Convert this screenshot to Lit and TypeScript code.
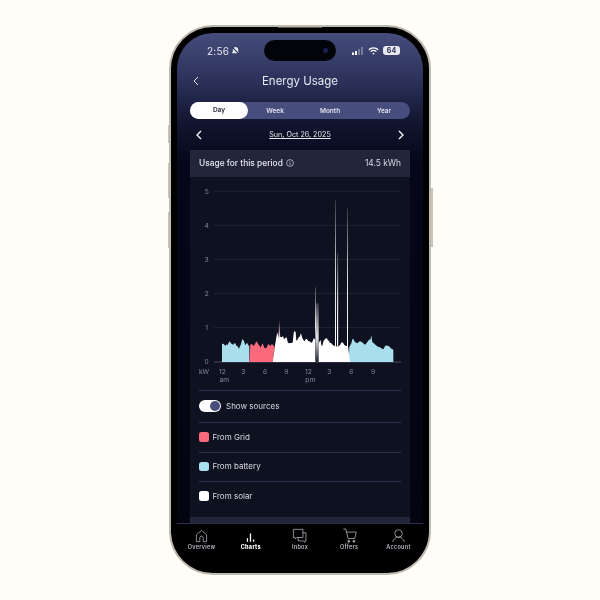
import { LitElement, html, css, svg } from "lit";
import { customElement } from "lit/decorators.js";

const blue1 = "96,546 96,492 100,491 103,494 107,497 110,493 113,495 118,484 122,488 125,492 130,494 133,490 136,490 139,497 142,498 147,506 150,498 152,495 155,484 157,477 160,480 163,486 165,493 167,495 170,489 172,490 175,496 178,498 178,546";
const red = "178,546 181,494 186,492 189,496 192,498 196,490 200,484 203,490 206,495 209,497 212,503 215,495 218,490 221,498 224,505 230,503 233,496 236,492 239,496 242,498 245,492 248,494 254,500 248,546";
const white = "248,546 256,490 259,472 262,457 265,470 268,476 271,470 276,472 279,468 282,478 286,474 290,472 293,486 296,490 302,489 308,488 311,460 313,453 317,456 319,482 322,480 326,472 329,470 333,460 336,472 340,480 344,484 347,478 350,476 354,482 358,484 362,487 366,488 370,478 372,474 376,480 376,546 386,546 386,490 390,482 392,480 394,496 397,497 400,484 403,480 406,476 409,474 412,478 416,482 420,488 424,490 428,494 431,497 435,498 444,500 447,497 450,496 453,490 456,486 460,490 463,495 468,498 474,498 480,546";
const blue2 = "476,546 478,500 481,496 484,490 487,478 490,476 493,484 496,486 499,489 502,490 506,486 510,484 514,485 518,488 522,492 526,494 529,490 532,486 535,482 538,478 541,480 544,466 546,480 548,488 552,490 556,494 560,497 564,500 568,501 572,503 576,506 580,508 584,500 588,496 592,497 596,498 600,502 604,506 607,507 610,510 610,546";

const tabs = [
  { label: "Overview", on: false, icon: svg`<path d="M3.500 10 11 3.500 18.500 10v10h-5v-5.500a2.500 2.500 0 0 0-5 0V20h-5z"/>` },
  { label: "Charts", on: true, icon: svg`<path d="M6.500 15v5M11 8v12M15.500 17v3" stroke-width="1.900"/>` },
  { label: "Inbox", on: false, icon: svg`<path d="M2 2h14v12H7l-2.500 2v-2H2z"/><path d="M16 7h4.500v12H19v2l-2.500-2H9v-5"/>` },
  { label: "Offers", on: false, icon: svg`<path d="M2 1.500h3.500l3.500 14h9.500L21 6H6.500"/><circle cx="10" cy="19.500" r="1.300" fill="currentColor"/><circle cx="17.500" cy="19.500" r="1.300" fill="currentColor"/>` },
  { label: "Account", on: false, icon: svg`<circle cx="11" cy="8" r="5.500"/><path d="M2.500 20.500c1-4.500 4.500-7 8.500-7s7.500 2.500 8.500 7"/>` },
];

@customElement("app-root")
export class AppRoot extends LitElement {
  static styles = css`
    :host {
      display: flex;
      align-items: center;
      justify-content: center;
      width: 600px;
      height: 600px;
      background: #fffdf6;
      font-family: "Inter", "Liberation Sans", sans-serif;
      color: #e6e8f0;
    }
    .phone {
      position: relative;
      width: 262px;
      height: 550px;
      box-sizing: border-box;
      padding: 6px;
      border-radius: 44px;
      background: #000;
      border: 2px solid #bdbaae;
      will-change: transform;
    }
    .btn { position: absolute; width: 1.500px; background: #c8c5b8; }
    .b1 { left: -3.500px; top: 98px; height: 18px; }
    .b2 { left: -3.500px; top: 136px; height: 35px; }
    .b3 { left: -3.500px; top: 185px; height: 36px; }
    .b4 { right: -3.500px; top: 161px; height: 59px; }
    .speaker { position: absolute; left: 107px; top: 0; width: 44px; height: 1px; background: #55544f; }
    .screen {
      height: 100%;
      border-radius: 36px;
      overflow: hidden;
      display: flex;
      flex-direction: column;
      background: linear-gradient(180deg, #474d7c 0, #2a3058 50px, #11152e 90px, #05071a 130px, #03040e 100%);
    }
    .status {
      height: 35px;
      flex: none;
      display: grid;
      grid-template-columns: 1fr 72px 1fr;
      align-items: center;
      font-size: 10px;
    }
    .time { display: flex; align-items: center; gap: 2px; padding-left: 30px; letter-spacing: 0.200px; }
    .island {
      height: 21px;
      border-radius: 11px;
      background: #03040a;
      display: flex;
      align-items: center;
      justify-content: flex-end;
      padding-right: 8px;
      box-sizing: border-box;
    }
    .lens { width: 5px; height: 5px; border-radius: 50%; background: #1a2050; }
    .sys { display: flex; align-items: center; justify-content: flex-end; gap: 4px; padding-right: 23px; }
    .batt {
      width: 17px;
      height: 9px;
      border-radius: 3px;
      background: #e8e8ee;
      color: #2a3058;
      font-size: 7px;
      font-weight: 700;
      line-height: 9px;
      text-align: center;
    }
    .head {
      position: relative;
      display: flex;
      align-items: center;
      justify-content: center;
      height: 26px;
      flex: none;
      font-size: 11.500px;
    }
    .back { position: absolute; left: 16px; top: 8px; }
    .body { padding: 8px 13px 0; flex: 1; display: flex; flex-direction: column; min-height: 0; }
    .seg {
      display: grid;
      grid-template-columns: 58px 54px 56px 52px;
      height: 17px;
      border-radius: 9px;
      background: #474d7c;
      font-size: 6.500px;
      font-weight: 600;
      align-items: center;
      flex: none;
      text-align: center;
      color: #e0e2ee;
    }
    .seg .active {
      height: 17px;
      line-height: 17px;
      border-radius: 9px;
      background: #fff;
      color: #1a1d30;
    }
    .date {
      display: flex;
      align-items: center;
      justify-content: space-between;
      height: 15px;
      margin-top: 8px;
      padding: 0 6px;
      font-size: 7.200px;
      flex: none;
    }
    .date span { text-decoration: underline; }
    .card { margin-top: 8px; flex: 1; min-height: 0; background: #0e1120; display: flex; flex-direction: column; }
    .card-head {
      flex: none;
      height: 27px;
      background: #23263a;
      display: flex;
      align-items: center;
      justify-content: space-between;
      padding: 0 9px 1px;
      box-sizing: border-box;
      font-size: 8.400px;
      font-weight: 500;
    }
    .card-head .l { display: flex; align-items: center; gap: 3px; }
    .total { font-weight: 400; color: #d8dae4; }
    .chart { flex: none; display: block; width: 220px; height: 210px; margin-top: 3px; }
    .chart text { font-family: "Inter", "Liberation Sans", sans-serif; font-size: 20px; fill: #85889a; }
    .rows { padding: 0 9px; flex: none; }
    .row {
      display: flex;
      align-items: center;
      gap: 4px;
      height: 29.500px;
      padding-bottom: 1px;
      border-top: 1px solid #2c2f4c;
      box-sizing: border-box;
      font-size: 8px;
      color: #d8dae4;
    }
    .row.first { height: 32px; gap: 5px; }
    .toggle {
      width: 22px;
      height: 12px;
      border-radius: 6px;
      background: #fff;
      display: flex;
      justify-content: flex-end;
      align-items: center;
      padding-right: 1px;
      box-sizing: border-box;
    }
    .knob { width: 10px; height: 10px; border-radius: 50%; background: #474d7c; }
    .sw { width: 9.500px; height: 9.500px; border-radius: 2.500px; }
    .next { flex: none; height: 6px; margin-top: auto; background: #23263a; }
    .tabs {
      flex: none;
      height: 44px;
      background: #000;
      border-top: 1px solid #2c2f4c;
      display: grid;
      grid-template-columns: repeat(5, 1fr);
      box-sizing: border-box;
    }
    .tab {
      display: flex;
      flex-direction: column;
      align-items: center;
      color: #b8bac4;
      font-size: 5.500px;
      font-weight: 600;
      letter-spacing: 0.300px;
      padding-top: 4px;
    }
    .tab.on { color: #fff; font-weight: 800; }
    .tab svg { width: 15px; height: 15px; margin-bottom: 0.500px; fill: none; stroke: currentColor; stroke-width: 1.100; }
  `;

  render() {
    const ys = [34, 136, 238, 341, 443];
    const labels = ["5", "4", "3", "2", "1"];
    const ticks: [string, number][] = [["12", 97], ["3", 160], ["6", 225], ["9", 289], ["12", 355], ["3", 418], ["6", 484], ["9", 549]];
    return html`
      <div class="phone">
        <i class="btn b1"></i><i class="btn b2"></i><i class="btn b3"></i><i class="btn b4"></i><i class="speaker"></i>
        <div class="screen">
          <div class="status">
            <div class="time">2:56
              <svg width="9" height="9" viewBox="0 0 10 10" fill="#e6e8f0"><path d="M5 1a3 3 0 0 0-3 3v2L1 8h8L8 6V4a3 3 0 0 0-3-3z"/><path d="M1 1l8 8" stroke="#2a3058" stroke-width="1.200"/></svg>
            </div>
            <div class="island"><i class="lens"></i></div>
            <div class="sys">
              <svg width="12" height="8" viewBox="0 0 12 8"><rect x="0" y="5.500" width="2" height="2.500" fill="#fff"/><rect x="3" y="4" width="2" height="4" fill="#fff"/><rect x="6" y="2" width="2" height="6" fill="#777b9c"/><rect x="9" y="0" width="2" height="8" fill="#777b9c"/></svg>
              <svg width="11" height="8" viewBox="0 0 11 8" fill="none" stroke="#fff" stroke-width="1.300"><path d="M.8 2.800a6.800 6.800 0 0 1 9.400 0M2.600 4.600a4.200 4.200 0 0 1 5.800 0"/><circle cx="5.500" cy="6.600" r=".9" fill="#fff" stroke="none"/></svg>
              <div class="batt">64</div>
            </div>
          </div>
          <div class="head">
            <svg class="back" width="6" height="10" viewBox="0 0 6 10" fill="none" stroke="#e6e8f0" stroke-width="1"><path d="M5 1 1 5l4 4"/></svg>
            Energy Usage
          </div>
          <div class="body">
            <div class="seg">
              <div class="active">Day</div><div>Week</div><div>Month</div><div>Year</div>
            </div>
            <div class="date">
              <svg width="6" height="10" viewBox="0 0 6 10" fill="none" stroke="#fff" stroke-width="1.300"><path d="M5 1 1 5l4 4"/></svg>
              <span>Sun, Oct 26, 2025</span>
              <svg width="6" height="10" viewBox="0 0 6 10" fill="none" stroke="#fff" stroke-width="1.300"><path d="m1 1 4 4-4 4"/></svg>
            </div>
            <div class="card">
              <div class="card-head">
                <div class="l">Usage for this period
                  <svg width="8" height="8" viewBox="0 0 8 8" fill="none" stroke="#d8dae4" stroke-width=".7"><circle cx="4" cy="4" r="3.400"/><path d="M4 3.500V6M4 2v.8"/></svg>
                </div>
                <div class="total">14.5 kWh</div>
              </div>
              <svg class="chart" viewBox="0 0 660 630">
                <defs>
                  <linearGradient id="spike" x1="0" y1="0" x2="0" y2="1">
                    <stop offset="0" stop-color="#fff" stop-opacity=".15"/>
                    <stop offset=".5" stop-color="#fff" stop-opacity=".85"/>
                    <stop offset="1" stop-color="#fff"/>
                  </linearGradient>
                  <linearGradient id="slot" x1="0" y1="0" x2="0" y2="1">
                    <stop offset="0" stop-color="#fff" stop-opacity=".2"/>
                    <stop offset=".6" stop-color="#fff" stop-opacity=".9"/>
                    <stop offset="1" stop-color="#fff" stop-opacity=".1"/>
                  </linearGradient>
                  <linearGradient id="pink" x1="0" y1="0" x2="0" y2="1">
                    <stop offset="0" stop-color="#f08aa0" stop-opacity=".3"/>
                    <stop offset="1" stop-color="#fff"/>
                  </linearGradient>
                </defs>
                ${ys.map((y, i) => svg`
                  <line x1="72" x2="633" y1=${y} y2=${y} stroke="#2a2d40" stroke-width="2"/>
                  <text x="50" y=${y + 7} text-anchor="middle">${labels[i]}</text>`)}
                <line x1="72" x2="633" y1="546" y2="546" stroke="#4a4d60" stroke-width="3"/>
                <text x="50" y="553" text-anchor="middle">0</text>
                <text x="42" y="581" text-anchor="middle">kW</text>
                ${ticks.map(([t, x]) => svg`<text x=${x} y="581" text-anchor="middle">${t}</text>`)}
                <text x="103" y="607" text-anchor="middle">am</text>
                <text x="361" y="607" text-anchor="middle">pm</text>
                <polygon points=${blue1} fill="#a9dfec"/>
                <polygon points=${red} fill="#fa6a7c"/>
                <polygon points=${blue2} fill="#a9dfec"/>
                <polygon points=${white} fill="#fff"/>
                <polygon points="265,480 268,414 271,480" fill="url(#pink)"/>
                <rect x="375" y="322" width="3" height="190" fill="url(#slot)"/>
                <rect x="378" y="370" width="8" height="172" fill="url(#slot)"/>
                <rect x="435" y="60" width="3" height="440" fill="url(#spike)"/>
                <rect x="441" y="220" width="3.500" height="280" fill="url(#spike)"/>
                <rect x="471" y="85" width="3" height="415" fill="url(#spike)"/>
              </svg>
              <div class="rows">
                <div class="row first"><div class="toggle"><i class="knob"></i></div>Show sources</div>
                <div class="row"><i class="sw" style="background:#fa6a7c"></i>From Grid</div>
                <div class="row"><i class="sw" style="background:#a9dfec"></i>From battery</div>
                <div class="row"><i class="sw" style="background:#fff"></i>From solar</div>
              </div>
              <div class="next"></div>
            </div>
          </div>
          <div class="tabs">
            ${tabs.map(t => html`<div class="tab ${t.on ? "on" : ""}"><svg viewBox="0 0 22 22">${t.icon}</svg>${t.label}</div>`)}
          </div>
        </div>
      </div>
    `;
  }
}
